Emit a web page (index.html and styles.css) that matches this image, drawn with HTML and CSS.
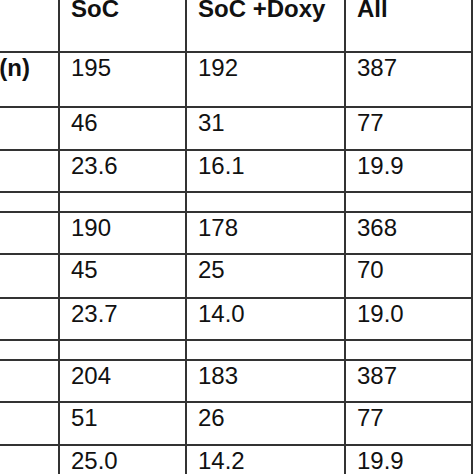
FILE: index.html
```html
<!DOCTYPE html>
<html lang="en">
<head>
<meta charset="utf-8">
<title>Table</title>
<link rel="stylesheet" href="styles.css">
</head>
<body>
<div class="table">
  <div class="cell label"></div><div class="cell head">SoC</div><div class="cell head">SoC +Doxy</div><div class="cell head">All</div>
  <div class="cell label head">(n)</div><div class="cell">195</div><div class="cell">192</div><div class="cell">387</div>
  <div class="cell label"></div><div class="cell">46</div><div class="cell">31</div><div class="cell">77</div>
  <div class="cell label"></div><div class="cell">23.6</div><div class="cell">16.1</div><div class="cell">19.9</div>
  <div class="cell blank"></div><div class="cell blank"></div><div class="cell blank"></div><div class="cell blank"></div>
  <div class="cell label"></div><div class="cell">190</div><div class="cell">178</div><div class="cell">368</div>
  <div class="cell label"></div><div class="cell">45</div><div class="cell">25</div><div class="cell">70</div>
  <div class="cell label"></div><div class="cell">23.7</div><div class="cell">14.0</div><div class="cell">19.0</div>
  <div class="cell blank"></div><div class="cell blank"></div><div class="cell blank"></div><div class="cell blank"></div>
  <div class="cell label"></div><div class="cell">204</div><div class="cell">183</div><div class="cell">387</div>
  <div class="cell label"></div><div class="cell">51</div><div class="cell">26</div><div class="cell">77</div>
  <div class="cell label"></div><div class="cell">25.0</div><div class="cell">14.2</div><div class="cell">19.9</div>
</div>
</body>
</html>
```
FILE: styles.css
```css
html, body {
  margin: 0;
  padding: 0;
  background: #ffffff;
  overflow: hidden;
}

.table {
  display: grid;
  grid-template-columns: 96px 125px 157px 125px;
  grid-template-rows: 58px 53px 41px 40px 18px 40px 42px 40px 18px 40px 41px 41px;
  gap: 2px;
  padding: 2px;
  width: max-content;
  margin: -9px 0 0 -40px;
  background: #333333;
  font-family: "Liberation Sans", Arial, sans-serif;
  font-size: 24px;
  line-height: 28px;
  color: #111111;
}

.cell {
  background: #ffffff;
  padding: 1px 0 0 11px;
  white-space: nowrap;
}

.head {
  font-weight: bold;
  padding-top: 2px;
}

.label {
  text-align: right;
  padding: 1px 28px 0 0;
}
```
